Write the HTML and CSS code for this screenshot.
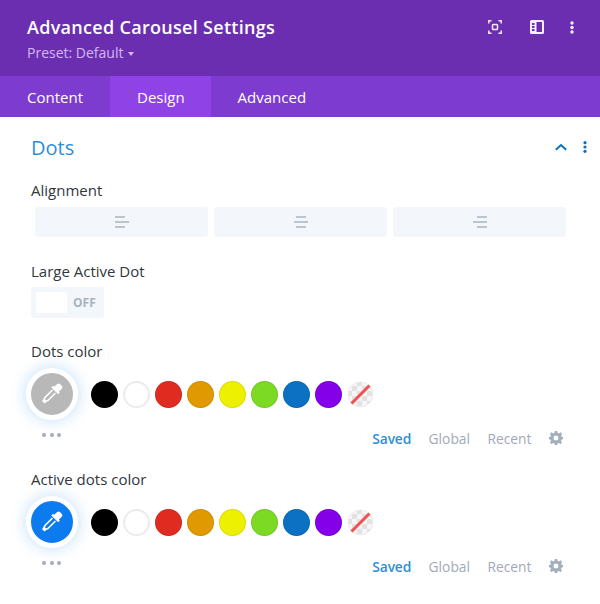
FILE: index.html
```html
<!DOCTYPE html>
<html>
<head>
	<title>Advanced Carousel Settings</title>
	<link rel="stylesheet" href="styles.css">
</head>
<body>

<div class="header">
	<div class="head-text">
		<div class="title">Advanced Carousel Settings</div>
		<div class="preset">Preset: Default <span class="caret"></span></div>
	</div>
	<div class="head-icons">
		<svg class="icon-focus" width="14" height="14" viewBox="0 0 14 14" fill="none" stroke="#f3e9ff" stroke-width="1.500">
			<path d="M.8 3.500V.8H3.500M10.500 .8H13.200V3.500M13.200 10.500V13.200H10.500M3.500 13.200H.8V10.500"/>
			<rect x="4.500" y="4.500" width="5" height="5" rx=".8"/>
		</svg>
		<svg width="14" height="14" viewBox="0 0 14 14">
			<path fill="#f6efff" fill-rule="evenodd" d="M1.500 0H12.500A1.500 1.500 0 0 1 14 1.500V12.500A1.500 1.500 0 0 1 12.500 14H1.500A1.500 1.500 0 0 1 0 12.500V1.500A1.500 1.500 0 0 1 1.500 0ZM6.500 2V12H12V2ZM2 3V5H4.500V3ZM2 6V8H4.500V6ZM2 9V11H4.500V9Z"/>
		</svg>
		<svg width="4" height="13" viewBox="0 0 4 13" fill="#f6efff">
			<circle cx="2" cy="2" r="1.700"/><circle cx="2" cy="6.500" r="1.700"/><circle cx="2" cy="11" r="1.700"/>
		</svg>
	</div>
</div>

<div class="tabs">
	<div class="tab">Content</div>
	<div class="tab tab-active">Design</div>
	<div class="tab">Advanced</div>
</div>

<div class="panel">
	<div class="section-head">
		<div class="section-title">Dots</div>
		<div class="section-icons">
			<svg width="12" height="8" viewBox="0 0 12 8" fill="none" stroke="#0c71c3" stroke-width="2"><path d="M.8 6.800L6 2L11.200 6.800"/></svg>
			<svg width="4" height="12" viewBox="0 0 4 12" fill="#0c71c3">
				<circle cx="2" cy="1.700" r="1.600"/><circle cx="2" cy="6" r="1.600"/><circle cx="2" cy="10.300" r="1.600"/>
			</svg>
		</div>
	</div>

	<div class="label label-align">Alignment</div>
	<div class="align-row">
		<div class="align-btn">
			<svg width="14" height="12" viewBox="0 0 14 12" fill="#bcc4cf"><rect width="10" height="2" y="0"/><rect width="14" height="2" y="5"/><rect width="10" height="2" y="10"/></svg>
		</div>
		<div class="align-btn">
			<svg width="14" height="12" viewBox="0 0 14 12" fill="#bcc4cf"><rect x="2" width="10" height="2" y="0"/><rect width="14" height="2" y="5"/><rect x="2" width="10" height="2" y="10"/></svg>
		</div>
		<div class="align-btn">
			<svg width="14" height="12" viewBox="0 0 14 12" fill="#bcc4cf"><rect x="4" width="10" height="2" y="0"/><rect width="14" height="2" y="5"/><rect x="4" width="10" height="2" y="10"/></svg>
		</div>
	</div>

	<div class="label label-toggle">Large Active Dot</div>
	<div class="toggle">
		<div class="knob"></div>
		<div class="toggle-text">OFF</div>
	</div>

	<div class="label label-color">Dots color</div>
	<div class="color-row">
		<div class="picker picker-grey">
			<svg width="22" height="22" viewBox="0 0 22 22"><use href="#dropper"/></svg>
		</div>
		<div class="swatches">
			<div class="swatch" style="background:#000"></div>
			<div class="swatch swatch-white"></div>
			<div class="swatch" style="background:#e02b20"></div>
			<div class="swatch" style="background:#e09900"></div>
			<div class="swatch" style="background:#edf000"></div>
			<div class="swatch" style="background:#7cda24"></div>
			<div class="swatch" style="background:#0c71c3"></div>
			<div class="swatch" style="background:#8300e9"></div>
			<div class="swatch swatch-none"><svg width="27" height="27" viewBox="0 0 27 27"><use href="#none-mark"/></svg></div>
		</div>
	</div>
	<div class="color-foot">
		<div class="more"><i></i><i></i><i></i></div>
		<div class="links">
			<span class="link-on">Saved</span>
			<span>Global</span>
			<span>Recent</span>
			<svg width="14" height="14" viewBox="0 0 14 14"><use href="#gear"/></svg>
		</div>
	</div>

	<div class="label label-color2">Active dots color</div>
	<div class="color-row">
		<div class="picker picker-blue">
			<svg width="22" height="22" viewBox="0 0 22 22"><use href="#dropper"/></svg>
		</div>
		<div class="swatches">
			<div class="swatch" style="background:#000"></div>
			<div class="swatch swatch-white"></div>
			<div class="swatch" style="background:#e02b20"></div>
			<div class="swatch" style="background:#e09900"></div>
			<div class="swatch" style="background:#edf000"></div>
			<div class="swatch" style="background:#7cda24"></div>
			<div class="swatch" style="background:#0c71c3"></div>
			<div class="swatch" style="background:#8300e9"></div>
			<div class="swatch swatch-none"><svg width="27" height="27" viewBox="0 0 27 27"><use href="#none-mark"/></svg></div>
		</div>
	</div>
	<div class="color-foot">
		<div class="more"><i></i><i></i><i></i></div>
		<div class="links">
			<span class="link-on">Saved</span>
			<span>Global</span>
			<span>Recent</span>
			<svg width="14" height="14" viewBox="0 0 14 14"><use href="#gear"/></svg>
		</div>
	</div>
</div>

<svg class="defs" width="0" height="0">
	<defs>
		<g id="dropper">
			<path fill="#fff" d="M16 1.300a2.300 2.300 0 0 1 3.200 0l1.400 1.400a2.300 2.300 0 0 1 0 3.200l-2.700 2.700 1 1-1.700 1.700-6.900-6.900 1.700-1.700 1 1z"/>
			<path fill="none" stroke="#fff" stroke-width="1.600" stroke-linejoin="round" d="M11.500 7L3.700 14.800 3 18.500l3.700-.7 7.800-7.800"/>
			<path fill="#fff" d="M3 15.500l3 3-2.500 2-2.500-2.500z"/>
		</g>
		<g id="none-mark">
			<pattern id="check" width="10" height="10" patternUnits="userSpaceOnUse">
				<rect width="10" height="10" fill="#f6f6f6"/>
				<rect width="5" height="5" fill="#e2e2e2"/>
				<rect x="5" y="5" width="5" height="5" fill="#e2e2e2"/>
			</pattern>
			<circle cx="13.500" cy="13.500" r="12.500" fill="url(#check)" stroke="#ececec"/>
			<path d="M4.500 22.500L22.500 4.500" stroke="#f05050" stroke-width="3"/>
		</g>
		<g id="gear">
			<path fill="#a3adbb" fill-rule="evenodd" d="M5.800 0H8.200L8.600 1.900 9.900 2.400 11.500 1.300 13.100 3 12 4.500 12.500 5.800 14 6V8.300L12.500 8.600 12 9.900 13 11.500 11.400 13.100 9.900 12 8.600 12.500 8.200 14H5.800L5.400 12.500 4.100 12 2.500 13 .9 11.400 2 9.900 1.500 8.600 0 8.300V6L1.500 5.700 2 4.400 1 3 2.600 1.300 4.100 2.400 5.400 1.900ZM7 4.500A2.500 2.500 0 1 0 7 9.500 2.500 2.500 0 0 0 7 4.500Z"/>
		</g>
	</defs>
</svg>

</body>
</html>
```

FILE: styles.css
```css
* {box-sizing: border-box;}
body {margin: 0; background: #fff; font-family: "Open Sans", sans-serif; color: #32373c; overflow: hidden;}
.defs {position: absolute;}

.header {height: 76px; background: #6c2eb1; padding: 14px 26px 0 27px; display: flex; justify-content: space-between;}
.title {font-size: 18px; line-height: 26px; font-weight: 600; color: #fff; letter-spacing: .3px;}
.preset {font-size: 14px; line-height: 20px; margin-top: 3px; color: #d4b8f2;}
.caret {display: inline-block; margin-left: 1px; vertical-align: 2px; border: 3px solid transparent; border-top: 4px solid #d4b8f2; border-bottom: 0;}
.head-icons {display: flex; align-items: center; gap: 26px; height: 26px;}
.icon-focus {margin-right: 2px;}

.tabs {height: 41px; background: #7d3bcf; display: flex;}
.tab {padding: 0 27px; font-size: 15px; line-height: 42px; font-weight: 500; color: #fff;}
.tab-active {background: #8f42e6; padding-right: 26px;}

.panel {padding: 0 13px 0 31px;}
.section-head {display: flex; justify-content: space-between; align-items: center; height: 60px;}
.section-title {font-size: 20px; color: #2e8fd5;}
.section-icons {display: flex; align-items: center; gap: 16px;}

.label {font-size: 15px; line-height: 20px; font-weight: 500; color: #32373c;}
.label-align {margin-top: 3px;}
.label-toggle {margin-top: 24px;}
.label-color {margin-top: 23px;}
.label-color2 {margin-top: 13px;}

.align-row {display: flex; gap: 6px; margin: 7px 21px 0 4px;}
.align-btn {flex: 1; height: 30px; background: #f3f6fa; border-radius: 3px; display: flex; align-items: center; justify-content: center;}

.toggle {width: 73px; height: 31px; margin-top: 6px; background: #f3f6fa; border-radius: 3px; padding: 5px; display: flex; align-items: center;}
.knob {width: 31px; height: 21px; background: #fff; border-radius: 3px;}
.toggle-text {margin-left: 6px; font-size: 12px; font-weight: 700; color: #a9b2bf;}

.color-row {display: flex; align-items: center; margin: 7px 0 0 -5px;}
.picker {width: 52px; height: 52px; border-radius: 50%; border: 5px solid #fff; display: flex; align-items: center; justify-content: center; box-shadow: 0 0 16px rgba(46, 143, 230, .3);}
.picker-grey {background: #b8b8b8;}
.picker-blue {background: #0d7bf0;}
.swatches {display: flex; gap: 5px; margin-left: 13px;}
.swatch {width: 27px; height: 27px; border-radius: 50%; box-shadow: inset 0 0 0 1px rgba(0, 0, 0, .08);}
.swatch-white {background: #fff; box-shadow: inset 0 0 0 2px #ebebeb;}
.swatch-none {box-shadow: none;}
.swatch-none svg {display: block;}

.color-foot {display: flex; justify-content: space-between; height: 36px;}
.more {display: flex; gap: 3.500px; margin: 13px 0 0 11px;}
.more i {width: 4px; height: 4px; border-radius: 50%; background: #a8a8c0;}
.links {display: flex; align-items: center; gap: 17.500px; height: 20px; margin: 8px 24px 0 0; font-size: 13.800px; font-weight: 500; color: #9fa9b8;}
.link-on {color: #2e8fd5; font-weight: 600; letter-spacing: -.15px;}
```
